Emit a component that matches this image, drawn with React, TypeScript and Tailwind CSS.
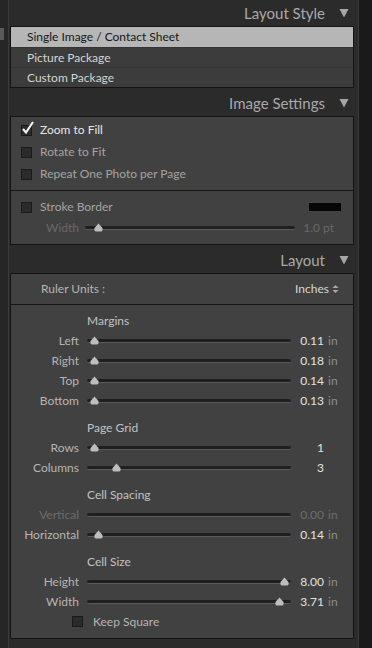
import React from "react";

const font = { fontFamily: "Lato, 'Open Sans', sans-serif" };

function Triangle() {
  return (
    <svg width="10" height="10" viewBox="0 0 10 10" className="shrink-0">
      <path d="M0.5 1 L9.5 1 L5 9.5 Z" fill="#a6a6a6" />
    </svg>
  );
}

function Header({ title }: { title: string }) {
  return (
    <div className="h-[26px] flex items-center justify-end gap-[14px] pr-[5px] text-[15px] text-[#a9a9a9]">
      <span>{title}</span>
      <Triangle />
    </div>
  );
}

function Thumb() {
  return (
    <svg width="11" height="9" viewBox="0 0 11 9">
      <path d="M5.5 0.5 L9.5 5 Q10 8.5 8 8.5 L3 8.5 Q1 8.5 1.5 5 Z" fill="#bdbdbd" />
    </svg>
  );
}

function Track({ pos, showThumb = true }: { pos: number; showThumb?: boolean }) {
  return (
    <div className="relative flex-1 h-[9px] flex items-center">
      <div className="w-full h-[4px] rounded-full bg-[#1f1f1f] border-b border-[#5a5a5a]" />
      {showThumb && (
        <div className="absolute top-[-1px]" style={{ left: pos - 5.5 }}>
          <Thumb />
        </div>
      )}
    </div>
  );
}

function Box({ checked = false }: { checked?: boolean }) {
  return (
    <div className="relative w-[11px] h-[11px] bg-[#2b2b2b] border border-[#1a1a1a] shrink-0">
      {checked && (
        <svg width="14" height="14" viewBox="0 0 14 14" className="absolute left-[-1px] top-[-5px]">
          <path d="M2 8 L5 11.5 L12 1" stroke="#f2f2f2" strokeWidth="2.2" fill="none" />
        </svg>
      )}
    </div>
  );
}

function Slider({
  label,
  value,
  unit,
  pos,
  dim = false,
}: {
  label: string;
  value: string;
  unit?: string;
  pos: number;
  dim?: boolean;
}) {
  return (
    <div className="h-[20px] flex items-center text-[12px]">
      <div className={`w-[76px] text-right pr-[8px] ${dim ? "text-[#6c6c6c]" : "text-[#b5b5b5]"}`}>{label}</div>
      <Track pos={pos} showThumb={!dim} />
      <div className={`w-[33px] text-right ${dim ? "text-[#6c6c6c]" : "text-[#e2e2e2]"}`}>{value}</div>
      <div className={`w-[17px] pl-[4px] ${dim ? "text-[#6c6c6c]" : "text-[#8e8e8e]"}`}>{unit}</div>
    </div>
  );
}

function Group({ title }: { title: string }) {
  return <div className="h-[20px] flex items-center pl-[76px] text-[12px] text-[#c2c2c2]">{title}</div>;
}

export default function App() {
  return (
    <div className="w-[372px] h-[648px] flex overflow-hidden bg-[#1c1c1c]" style={font}>
      <div className="w-[9px] bg-[#262626] border-r border-[#3a3a3a] relative">
        <div className="absolute left-0 top-[28px] w-[4px] h-[12px] bg-[#5a5a5a]" />
      </div>
      <div className="w-[350px] bg-[#2b2b2b] border-r border-[#3a3a3a] pl-[1px] pr-[4px]">
        <Header title="Layout Style" />
        <div className="border border-[#141414] bg-[#3c3c3c] text-[12px]">
          <div className="h-[20px] flex items-center pl-[16px] bg-[#b6b6b6] text-[#161616]">Single Image / Contact Sheet</div>
          <div className="h-[20px] flex items-center pl-[16px] text-[#d4d4d4] border-t border-[#343434]">Picture Package</div>
          <div className="h-[20px] flex items-center pl-[16px] text-[#d4d4d4] border-t border-[#343434]">Custom Package</div>
        </div>

        <div className="h-[2px]" />
        <Header title="Image Settings" />
        <div className="border border-[#141414] bg-[#414141] text-[12px]">
          <div className="pt-[2px] pb-[5px] px-[10px]">
            <div className="h-[22px] flex items-center gap-[8px] text-[#e6e6e6]">
              <Box checked />
              <span>Zoom to Fill</span>
            </div>
            <div className="h-[22px] flex items-center gap-[8px] text-[#a4a4a4]">
              <Box />
              <span>Rotate to Fit</span>
            </div>
            <div className="h-[22px] flex items-center gap-[8px] text-[#a4a4a4]">
              <Box />
              <span>Repeat One Photo per Page</span>
            </div>
          </div>
          <div className="border-t border-[#161616] pt-[5px] pb-[6px]">
            <div className="h-[22px] flex items-center gap-[8px] pl-[10px] pr-[12px] text-[#a4a4a4]">
              <Box />
              <span className="flex-1">Stroke Border</span>
              <div className="w-[32px] h-[8px] bg-[#060606]" />
            </div>
            <div className="h-[20px] flex items-center pr-[19px] text-[#686868]">
              <div className="w-[74px] text-right pr-[6px]">Width</div>
              <Track pos={13} />
              <div className="w-[39px] text-right">1.0 pt</div>
            </div>
          </div>
        </div>

        <div className="h-[2px]" />
        <Header title="Layout" />
        <div className="border border-[#141414] bg-[#414141] text-[12px]">
          <div className="h-[30px] flex items-center justify-between pl-[30px] pr-[14px] text-[#b5b5b5]">
            <span>Ruler Units :</span>
            <span className="flex items-center gap-[3px] text-[#d6d6d6]">
              Inches
              <svg width="7" height="10" viewBox="0 0 7 10">
                <path d="M3.5 1 L6.5 4 L0.5 4 Z M3.5 9 L6.5 6 L0.5 6 Z" fill="#a9a9a9" />
              </svg>
            </span>
          </div>
          <div className="border-t border-[#161616] pt-[6px] pb-[7px] pr-[12px]">
            <Group title="Margins" />
            <Slider label="Left" value="0.11" unit="in" pos={7} />
            <Slider label="Right" value="0.18" unit="in" pos={7} />
            <Slider label="Top" value="0.14" unit="in" pos={7} />
            <Slider label="Bottom" value="0.13" unit="in" pos={7} />
            <div className="h-[7px]" />
            <Group title="Page Grid" />
            <Slider label="Rows" value="1" pos={7} />
            <Slider label="Columns" value="3" pos={29} />
            <div className="h-[7px]" />
            <Group title="Cell Spacing" />
            <Slider label="Vertical" value="0.00" unit="in" pos={7} dim />
            <Slider label="Horizontal" value="0.14" unit="in" pos={11} />
            <div className="h-[7px]" />
            <Group title="Cell Size" />
            <Slider label="Height" value="8.00" unit="in" pos={197} />
            <Slider label="Width" value="3.71" unit="in" pos={192} />
            <div className="h-[19px] flex items-center gap-[10px] pl-[61px] text-[#b5b5b5]">
              <Box />
              <span>Keep Square</span>
            </div>
          </div>
        </div>
      </div>
      <div className="flex-1 bg-[#1a1a1a]" />
    </div>
  );
}
